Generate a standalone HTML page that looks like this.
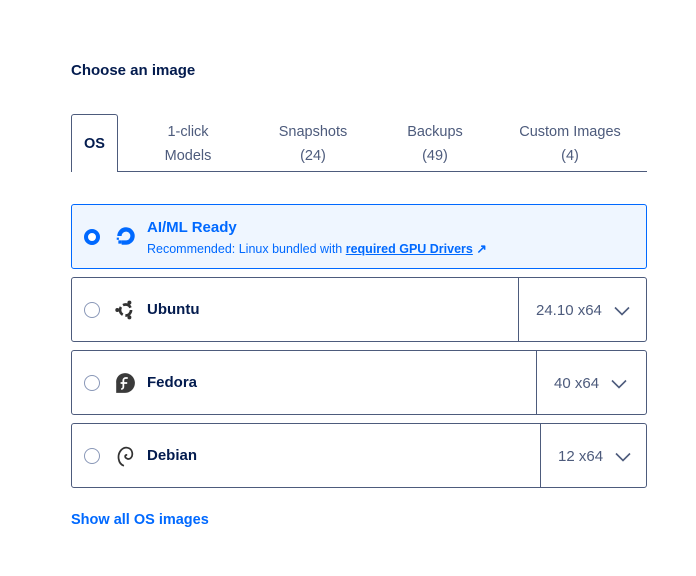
<!DOCTYPE html>
<html><head><style>
*{box-sizing:border-box;margin:0;padding:0}
body{width:696px;height:576px;background:#fff;font-family:"Liberation Sans",sans-serif;position:relative;color:#031b4e}
.abs{position:absolute}
.h{left:71px;top:62px;font-size:15px;font-weight:bold;color:#031b4e}
.tab{position:absolute;text-align:center;font-size:14.5px;color:#4d5b7c;line-height:24px}
.card{position:absolute;left:71px;width:576px;height:65px;border:1px solid #4d5b7c;border-radius:3px}
.radio{position:absolute;left:12px;top:24px;width:16px;height:16px;border:1.5px solid #8a98b8;border-radius:50%}
.name{position:absolute;left:75px;top:23px;font-size:15px;font-weight:bold;color:#031b4e}
.ver{position:absolute;top:0;right:0;height:63px;border-left:1px solid #4d5b7c;font-size:15px;color:#4d5b7c;display:flex;align-items:center;padding-left:17px;padding-top:2px}
.ver svg{margin-left:12px}
</style></head><body>
<div class="abs h">Choose an image</div>
<div class="abs" style="left:71px;top:114px;width:47px;height:58px;border:1px solid #4d5b7c;border-bottom:none;border-radius:3px 3px 0 0;background:#fff;z-index:2"></div>
<div class="abs" style="left:117px;top:171px;width:530px;height:1px;background:#4d5b7c"></div>
<div class="tab" style="left:71px;top:132px;width:47px;color:#031b4e;font-weight:bold;z-index:3">OS</div>
<div class="tab" style="left:138px;top:120px;width:100px">1-click<br>Models</div>
<div class="tab" style="left:253px;top:120px;width:120px">Snapshots<br>(24)</div>
<div class="tab" style="left:385px;top:120px;width:100px">Backups<br>(49)</div>
<div class="tab" style="left:500px;top:120px;width:140px">Custom Images<br>(4)</div>

<div class="card" style="top:204px;border-color:#0069ff;background:#eff6ff">
 <div class="radio" style="border:4.5px solid #0069ff;background:#fff;left:12px;top:24px"></div>
 <svg class="abs" style="left:42px;top:19px" width="24" height="24" viewBox="0 0 22 22"><path d="M11 19A8 8 0 1 0 3 11h4A4 4 0 1 1 11 15z" fill="#0069ff"/><rect x="7" y="15" width="4" height="4" fill="#0069ff"/><rect x="4" y="15" width="3" height="3" fill="#0069ff"/><rect x="2.5" y="12.5" width="2" height="2" fill="#0069ff"/></svg>
 <div class="abs" style="left:75px;top:14px;font-size:15px;font-weight:bold;color:#0069ff">AI/ML Ready</div>
 <div class="abs" style="left:75px;top:36px;font-size:12.5px;color:#0069ff">Recommended: Linux bundled with <b style="text-decoration:underline">required GPU Drivers</b> <b>↗</b></div>
</div>

<div class="card" style="top:277px">
 <div class="radio"></div>
 <svg class="abs" style="left:42px;top:21px" width="22" height="22" viewBox="0 0 20 20"><circle cx="10.5" cy="10" r="5" fill="none" stroke="#333" stroke-width="2.4" stroke-dasharray="8 2.5"/><circle cx="3" cy="10" r="1.8" fill="#333"/><circle cx="14" cy="3.3" r="1.8" fill="#333"/><circle cx="14" cy="16.7" r="1.8" fill="#333"/></svg>
 <div class="name">Ubuntu</div>
 <div class="ver" style="width:128px">24.10 x64<svg width="16" height="10" viewBox="0 0 16 10"><path d="M1 1.5l7 7 7-7" fill="none" stroke="#4d5b7c" stroke-width="1.6"/></svg></div>
</div>

<div class="card" style="top:350px">
 <div class="radio"></div>
 <svg class="abs" style="left:42px;top:21px" width="22" height="22" viewBox="0 0 20 20"><path d="M10 1a9 9 0 1 1 0 18H2V10a8 8 0 0 1 8-9z" fill="#3a3a3a"/><path d="M12.5 5.5h-2a2 2 0 0 0-2 2v6a2 2 0 0 1-2 2M6 10h6" fill="none" stroke="#fff" stroke-width="1.6"/></svg>
 <div class="name">Fedora</div>
 <div class="ver" style="width:110px">40 x64<svg width="16" height="10" viewBox="0 0 16 10"><path d="M1 1.5l7 7 7-7" fill="none" stroke="#4d5b7c" stroke-width="1.6"/></svg></div>
</div>

<div class="card" style="top:423px">
 <div class="radio"></div>
 <svg class="abs" style="left:42px;top:20px" width="22" height="24" viewBox="0 0 20 22"><path d="M9 20C3.5 18 2.5 10 6.5 5.5c3.5-3.5 9-2.5 10 2s-2 7-4.5 6-2.5-3.5 0-3.5" fill="none" stroke="#333" stroke-width="1.6"/></svg>
 <div class="name">Debian</div>
 <div class="ver" style="width:106px">12 x64<svg width="16" height="10" viewBox="0 0 16 10"><path d="M1 1.5l7 7 7-7" fill="none" stroke="#4d5b7c" stroke-width="1.6"/></svg></div>
</div>

<div class="abs" style="left:71px;top:512px;font-size:14.5px;font-weight:bold;color:#0069ff">Show all OS images</div>
</body></html>
